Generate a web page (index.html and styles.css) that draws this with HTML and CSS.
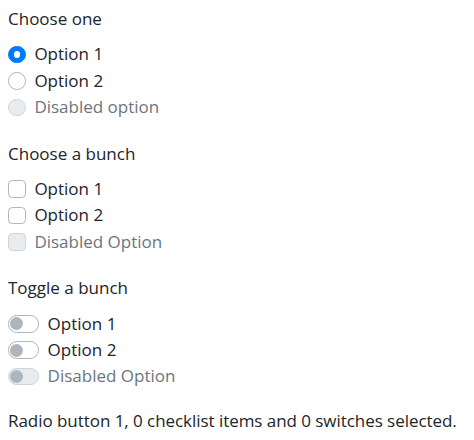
FILE: index.html
```html
<!DOCTYPE html>
<html>
<head>
<meta charset="utf-8">
<link rel="stylesheet" href="styles.css">
</head>
<body>
<div class="page">
  <div class="group">
    <div class="heading">Choose one</div>
    <div class="list">
      <div class="row"><span class="ctl radio checked"></span><span class="lbl">Option 1</span></div>
      <div class="row"><span class="ctl radio"></span><span class="lbl">Option 2</span></div>
      <div class="row"><span class="ctl radio disabled"></span><span class="lbl muted">Disabled option</span></div>
    </div>
  </div>
  <div class="group">
    <div class="heading">Choose a bunch</div>
    <div class="list">
      <div class="row"><span class="ctl box"></span><span class="lbl">Option 1</span></div>
      <div class="row"><span class="ctl box"></span><span class="lbl">Option 2</span></div>
      <div class="row"><span class="ctl box disabled"></span><span class="lbl muted">Disabled Option</span></div>
    </div>
  </div>
  <div class="group">
    <div class="heading">Toggle a bunch</div>
    <div class="list">
      <div class="row sw"><span class="switch"><span class="knob"></span></span><span class="lbl">Option 1</span></div>
      <div class="row sw"><span class="switch"><span class="knob"></span></span><span class="lbl">Option 2</span></div>
      <div class="row sw"><span class="switch disabled"><span class="knob"></span></span><span class="lbl muted">Disabled Option</span></div>
    </div>
  </div>
  <p class="summary">Radio button 1, 0 checklist items and 0 switches selected.</p>
</div>
</body>
</html>
```
FILE: styles.css
```css
html, body { margin: 0; padding: 0; background: #fff; }
body {
  font-family: "Open Sans", "Noto Sans", sans-serif;
  font-size: 17px;
  line-height: 26.4px;
  color: #212529;
}
.page { padding: 6px 8px 0 8px; display: flex; flex-direction: column; gap: 20px; }
.group { display: flex; flex-direction: column; gap: 9px; }
.heading { height: 26.4px; }
.list { display: flex; flex-direction: column; }
.row { display: flex; align-items: center; height: 26.4px; }
.ctl {
  box-sizing: border-box;
  width: 17.6px; height: 17.6px;
  border: 1px solid #adb5bd;
  background: #fff;
  margin-right: 8.8px;
  flex: none;
}
.radio { border-radius: 50%; }
.box { border-radius: 4.4px; }
.radio.checked {
  background: #007bff;
  border-color: #007bff;
  display: flex; align-items: center; justify-content: center;
}
.radio.checked::after {
  content: ""; width: 6.6px; height: 6.6px; border-radius: 50%; background: #fff;
}
.disabled { background: #e9ecef; border-color: #ced4da; }
.muted { color: #6c757d; }
.switch {
  box-sizing: border-box;
  width: 30.8px; height: 17.6px;
  border: 1px solid #adb5bd;
  border-radius: 8.8px;
  background: #fff;
  margin-right: 8.8px;
  flex: none;
  display: flex; align-items: center;
  padding-left: 1.2px;
}
.switch.disabled { background: #e9ecef; border-color: #ced4da; }
.knob { width: 13.2px; height: 13.2px; border-radius: 50%; background: #adb5bd; }
.summary { margin: -2px 0 0 0; white-space: nowrap; letter-spacing: -0.05px; }
```
